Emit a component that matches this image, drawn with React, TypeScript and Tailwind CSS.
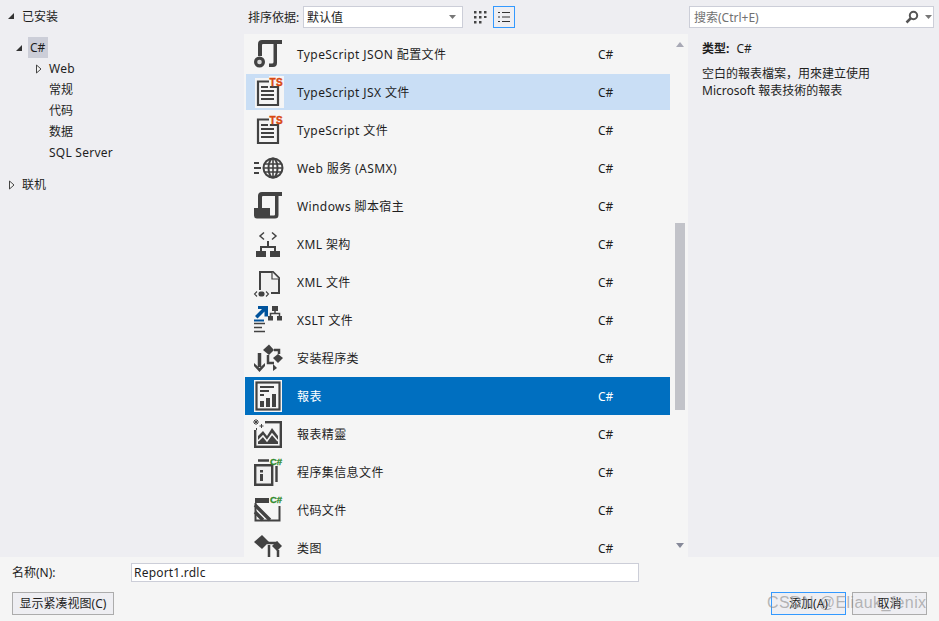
import React from "react";

const D = "#424242";
const BG = "#f5f5f5";

const Script = () => (
  <svg width="32" height="32" viewBox="0 0 32 32">
    <path d="M5 18V6a4 4 0 0 1 4-4h20v4h-5v19a4 4 0 0 1-4 4h-4v-3.500h3a1.500 1.500 0 0 0 1.500-1.500V6H10a1 1 0 0 0-1 1v11Z" fill={D} />
    <circle cx="6.500" cy="24" r="5.500" fill={D} />
    <circle cx="6.500" cy="24" r="2.300" fill="#d8d8d8" />
  </svg>
);

const WinScript = () => (
  <svg width="32" height="32" viewBox="0 0 32 32">
    <path d="M5 18V6a4 4 0 0 1 4-4h20v4h-3.500v19a3.500 3.500 0 0 1-3.500 3.500H4a3 3 0 0 1-3-3V18h16v7.500h4a1 1 0 0 0 1-1V6H10a1 1 0 0 0-1 1v11Z" fill={D} />
  </svg>
);

const TsDoc = ({ halo }: { halo?: boolean }) => (
  <svg width="32" height="32" viewBox="0 0 32 32">
    {halo ? <rect x="2" y="2" width="29" height="30" fill={BG} /> : null}
    <path d="M5 5.500h13v5.500h7v18H5Z" fill={BG} stroke={D} strokeWidth="2.200" />
    <path d="M8 11h7M8 15h13M8 19h13M8 23h13" stroke={D} strokeWidth="2" />
    <rect x="16" y="0" width="15" height="10" fill={BG} />
    <text x="16.500" y="9.500" fontSize="10" fontWeight="900" letterSpacing="0.5" fill="#d9480f" stroke="#d9480f" strokeWidth="0.4" fontFamily="'Liberation Sans',sans-serif">TS</text>
  </svg>
);

const Globe = () => (
  <svg width="32" height="32" viewBox="0 0 32 32">
    <path d="M1 11h5M1 16h7M1 21h5" stroke={D} strokeWidth="2" />
    <circle cx="20" cy="16" r="9.500" fill="none" stroke={D} strokeWidth="2" />
    <ellipse cx="20" cy="16" rx="4.500" ry="9.500" fill="none" stroke={D} strokeWidth="2" />
    <path d="M11 12h18M11 16h18M11 20h18M20 6v20" stroke={D} strokeWidth="1.600" />
  </svg>
);

const XmlSchema = () => (
  <svg width="32" height="32" viewBox="0 0 32 32">
    <path d="M11 4.500 7 8l4 3.500M19 4.500 23 8l-4 3.500" fill="none" stroke={D} strokeWidth="1.500" />
    <path d="M15 13v6M8 23v-4h14v4" fill="none" stroke={D} strokeWidth="2" />
    <rect x="3" y="23" width="10" height="6" fill={D} />
    <rect x="17" y="23" width="10" height="6" fill={D} />
  </svg>
);

const XmlFile = () => (
  <svg width="32" height="32" viewBox="0 0 32 32">
    <path d="M7 24V6h13l6 6v15h-8" fill="#f0f0f0" stroke={D} strokeWidth="2" />
    <path d="M19 6v7h7" fill={BG} stroke={D} strokeWidth="1.200" />
    <path d="M4 25.500 1.500 28 4 30.500M13 25.500l2.500 2.500-2.500 2.500" fill="none" stroke={D} strokeWidth="1.100" />
    <rect x="5.500" y="25.500" width="6" height="5" rx="2" fill={D} />
  </svg>
);

const Xslt = () => (
  <svg width="32" height="32" viewBox="0 0 32 32">
    <path d="M5 2h10v10.500h-3.500V7.500L4.500 14.500 2 12l7-7H5Z" fill="#00539c" />
    <path d="M1 15.500h10v2H1Z" fill="#00539c" />
    <rect x="19" y="2" width="6" height="5" fill={D} />
    <path d="M22 6v3.500M17.500 13V9.500h9V13" fill="none" stroke={D} strokeWidth="1.500" />
    <rect x="15" y="12" width="5" height="4.500" fill={D} />
    <rect x="24" y="12" width="5" height="4.500" fill={D} />
    <path d="M1 19.500h11M1 23.500h8M1 27.500h11" stroke={D} strokeWidth="1.700" />
  </svg>
);

const Installer = () => (
  <svg width="32" height="32" viewBox="0 0 32 32">
    <path d="M6.500 11v14" fill="none" stroke={D} strokeWidth="3.500" />
    <path d="M1 21v3l5.500 6 5.500-6v-3l-5.500 5Z" fill={D} />
    <path d="M10 8l6-5.500L21 8l-5 5Z" fill={D} />
    <path d="M21 8h5v4M15 13v8h6" fill="none" stroke={D} strokeWidth="2.500" />
    <path d="M20 16l5-4 5 4-5 5Z" fill={D} />
    <path d="M20 22l4 4-4 3Z" fill={D} />
  </svg>
);

const Report = () => (
  <svg width="32" height="32" viewBox="0 0 32 32">
    <rect x="1" y="0" width="28" height="32" fill={BG} />
    <rect x="3.500" y="2.500" width="23" height="27" fill="none" stroke={D} strokeWidth="2.200" />
    <path d="M7 7h14M7 11h9M7 15h4" stroke={D} strokeWidth="2" />
    <path d="M7 21h4v6H7ZM13 18h4v9h-4ZM19 14h4v13h-4Z" fill={D} />
  </svg>
);

const ReportWizard = () => (
  <svg width="32" height="32" viewBox="0 0 32 32">
    <rect x="2.200" y="4.200" width="25.600" height="24.600" fill="none" stroke={D} strokeWidth="2.400" />
    <path d="M5 26v-8l5-5 4 5 5-8 6 8v8Z" fill={D} />
    <path d="M5 23l5-5 4 5 5-7 6 7" fill="none" stroke={BG} strokeWidth="1.600" />
    <rect x="0" y="1" width="12" height="11" fill={BG} />
    <path d="M3 1v6M0 4h6M1 2l4 4M5 2 1 6M8.500 6v4M6.500 8h4M3.500 10v2" stroke={D} strokeWidth="1" />
  </svg>
);

const Badge = () => (
  <text x="17" y="9" fontSize="9.500" fontWeight="900" fill="#2f8a2c" stroke="#2f8a2c" strokeWidth="0.3" fontFamily="'Liberation Sans',sans-serif">C#</text>
);

const AsmInfo = () => (
  <svg width="32" height="32" viewBox="0 0 32 32">
    <path d="M2.200 9.200h17v19.600h-17Z" fill="#f0f0f0" stroke={D} strokeWidth="2.400" />
    <path d="M5 4.500h11M23.500 10v16" stroke={D} strokeWidth="2.400" fill="none" />
    <path d="M7 14h3v2.500H7ZM7 18h3v7H7Z" fill={D} />
    <Badge />
  </svg>
);

const CodeFile = () => (
  <svg width="32" height="32" viewBox="0 0 32 32">
    <path d="M2 4h14v5H2Z" fill={D} />
    <path d="M2 11l15 15M2 18l8 8" stroke={D} strokeWidth="3.500" fill="none" />
    <path d="M2.500 9v17.500h24V12" fill="none" stroke={D} strokeWidth="2" />
    <Badge />
  </svg>
);

const ClassDiagram = () => (
  <svg width="32" height="32" viewBox="0 0 32 32">
    <path d="M1 10l8-7 7 7-7 7Z" fill={D} />
    <path d="M14 11h11" stroke={D} strokeWidth="2.500" />
    <path d="M19 14l5-5 5 5-5 5Z" fill={D} />
    <path d="M16 13v16h9V18" fill="none" stroke={D} strokeWidth="2.500" />
  </svg>
);

const rows: { icon: React.ReactNode; name: string; state?: "hover" | "active" }[] = [
  { icon: <Script />, name: "TypeScript JSON 配置文件" },
  { icon: <TsDoc halo />, name: "TypeScript JSX 文件", state: "hover" },
  { icon: <TsDoc />, name: "TypeScript 文件" },
  { icon: <Globe />, name: "Web 服务 (ASMX)" },
  { icon: <WinScript />, name: "Windows 脚本宿主" },
  { icon: <XmlSchema />, name: "XML 架构" },
  { icon: <XmlFile />, name: "XML 文件" },
  { icon: <Xslt />, name: "XSLT 文件" },
  { icon: <Installer />, name: "安装程序类" },
  { icon: <Report />, name: "報表", state: "active" },
  { icon: <ReportWizard />, name: "報表精靈" },
  { icon: <AsmInfo />, name: "程序集信息文件" },
  { icon: <CodeFile />, name: "代码文件" },
  { icon: <ClassDiagram />, name: "类图" },
];

const Open = () => (
  <svg width="8" height="8" viewBox="0 0 8 8" className="shrink-0"><path d="M7 1v6H1Z" fill="#333" /></svg>
);
const Closed = () => (
  <svg width="7" height="10" viewBox="0 0 7 10" className="shrink-0"><path d="M1.500 1v8L6 5Z" fill="#f5f5f5" stroke="#444" /></svg>
);

const font = "font-['Noto_Sans','Noto_Sans_CJK_SC',sans-serif]";

export default function App() {
  return (
    <div className={`w-[939px] h-[621px] overflow-hidden relative bg-[#eeeef2] text-[12px] leading-[16px] text-[#1e1e1e] ${font}`}>
      <div className="flex h-[557px]">
        {/* Tree */}
        <div className="w-[244px] shrink-0 flex flex-col">
          <div className="h-[16px] mt-[8px] pl-[7px] flex items-center gap-[7px]">
            <Open /><span className="pt-[1px]">已安装</span>
          </div>
          <div className="mt-[13px] pl-[15px] h-[21px] flex items-center gap-[5px]">
            <Open />
            <span className="bg-[#ccced8] h-[21px] w-[20px] flex items-center pl-[2px]">C#</span>
          </div>
          <div className="h-[21px] pl-[35px] flex items-center gap-[7px]"><Closed /><span className="tracking-[0.3px]">Web</span></div>
          <div className="h-[21px] pl-[49px] flex items-center">常规</div>
          <div className="h-[21px] pl-[49px] flex items-center">代码</div>
          <div className="h-[21px] pl-[49px] flex items-center">数据</div>
          <div className="h-[21px] pl-[49px] flex items-center tracking-[0.25px]">SQL Server</div>
          <div className="h-[21px] mt-[11px] pl-[8px] flex items-center gap-[7px]"><Closed /><span>联机</span></div>
        </div>

        {/* Center */}
        <div className="w-[444px] shrink-0 flex flex-col">
          <div className="h-[34px] flex items-start pt-[6px]">
            <span className="ml-[4px] w-[55px] h-[22px] flex items-center pt-[1px]">排序依据:</span>
            <div className="w-[160px] h-[22px] bg-white border border-[#ccced8] flex items-center pl-[3px] pr-[5px] justify-between">
              <span className="pt-[1px]">默认值</span>
              <svg width="8" height="4" viewBox="0 0 8 4"><path d="M0 0h7L3.500 4Z" fill="#777" /></svg>
            </div>
            <div className="ml-[9px] w-[16px] h-[22px] flex items-center justify-center">
              <svg width="14" height="14" viewBox="0 0 14 14" fill="#444">
                <path d="M1 1h2.500v2.500H1ZM6 1h2.500v2.500H6ZM11 1h2.500v2.500H11ZM1 6h2.500v2.500H1ZM6 6h2.500v2.500H6ZM11 6h2.500v2H11ZM1 11h2.500v2.500H1ZM6 11h2.500v2.500H6Z" />
              </svg>
            </div>
            <div className="ml-[5px] w-[22px] h-[22px] border border-[#3399ff] flex items-center justify-center">
              <svg width="12" height="12" viewBox="0 0 12 12">
                <path d="M4 1.500h8M4 6h8M4 10.500h8" stroke="#333" />
                <path d="M0 1h2v1H0ZM0 5.500h2v1H0ZM0 10h2v1H0Z" fill="#333" />
              </svg>
            </div>
          </div>
          <div className="h-[523px] bg-[#f5f5f5] flex overflow-hidden">
            <div className="w-[426px] shrink-0 flex flex-col pt-[1px]">
              {rows.map((r) => (
                <div
                  key={r.name}
                  className={`h-[38px] shrink-0 flex items-center ${
                    r.state === "hover" ? "ml-[2px] border-y border-[#f5f5f5] bg-[#c9def5]" : r.state === "active" ? "ml-[1px] bg-[#006fc0] text-white" : ""
                  }`}
                >
                  <div
                    className={`shrink-0 flex justify-center w-[32px] ${
                      r.state === "hover" ? "ml-[7px]" : r.state === "active" ? "ml-[8px]" : "ml-[9px]"
                    }`}
                  >
                    {r.icon}
                  </div>
                  <span className="ml-[12px] w-[301px] shrink-0 tracking-[0.4px] pt-[2px]">{r.name}</span>
                  <span className="pt-[2px]">C#</span>
                </div>
              ))}
            </div>
            <div className="w-[18px] shrink-0 flex flex-col items-center relative pl-[2px]">
              <svg className="mt-[8px]" width="8" height="5" viewBox="0 0 8 5"><path d="M4 0l4 5H0Z" fill="#a8a9b5" /></svg>
              <div className="mt-[176px] w-[10px] h-[187px] bg-[#c2c3c9]" />
              <svg className="mt-[133px]" width="8" height="5" viewBox="0 0 8 5"><path d="M4 5l4-5H0Z" fill="#868999" /></svg>
            </div>
          </div>
        </div>

        {/* Right */}
        <div className="flex-1 min-w-0 flex flex-col">
          <div className="mt-[6px] ml-[1px] w-[245px] h-[22px] bg-white border border-[#ccced8] flex items-center pl-[4px] pr-[1px] text-[#717171]">
            <span className="pt-[1px] flex-1">搜索(Ctrl+E)</span>
            <span className="flex items-center gap-[6px]">
              <svg width="14" height="14" viewBox="0 0 14 14">
                <circle cx="8.500" cy="5.500" r="3.700" fill="none" stroke="#555" strokeWidth="2" />
                <path d="M6 8 1.500 12.500" stroke="#555" strokeWidth="2.500" />
              </svg>
              <svg width="7" height="4" viewBox="0 0 7 4"><path d="M0 0h7L3.500 4Z" fill="#777" /></svg>
            </span>
          </div>
          <div className="mt-[13px] ml-[14px] flex gap-[7px]">
            <span className="font-bold">类型:</span><span>C#</span>
          </div>
          <div className="mt-[8px] ml-[14px] w-[200px] leading-[17px]">
            空白的報表檔案，用來建立使用 Microsoft 報表技術的報表
          </div>
        </div>
      </div>

      {/* Bottom */}
      <div className="h-[64px] bg-[#f5f5f5] flex flex-col">
        <div className="flex items-center pt-[6px] pl-[12px]">
          <span className="w-[119px]">名称(N):</span>
          <div className="w-[508px] h-[19px] bg-white border border-[#ccced8] pl-[2px] flex items-center tracking-[0.2px]">Report1.rdlc</div>
        </div>
        <div className="flex items-center mt-[10px] pl-[12px]">
          <div className="w-[102px] h-[23px] bg-[#eeeef2] border border-[#acacac] flex items-center justify-center">显示紧凑视图(C)</div>
          <div className="ml-[657px] w-[75px] h-[23px] bg-[#eeeef2] border border-[#3399ff] flex items-center justify-center">添加(A)</div>
          <div className="ml-[6px] w-[75px] h-[23px] bg-[#eeeef2] border border-[#acacac] flex items-center justify-center">取消</div>
        </div>
      </div>

      <div className="absolute left-[767px] top-[592px] pt-[1px] text-[16px] leading-[20px] tracking-[0.4px] text-[#8a8a8a]/60 font-['Liberation_Sans',sans-serif] pointer-events-none whitespace-nowrap">
        CSDN @Eliauk_fenix
      </div>
    </div>
  );
}
